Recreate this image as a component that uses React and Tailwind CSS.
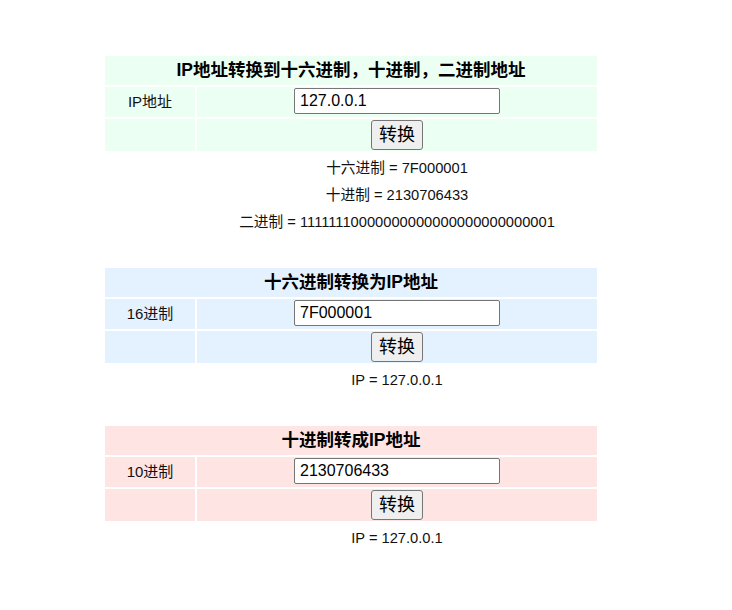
import React from 'react';

const font = { fontFamily: '"Liberation Sans", "Noto Sans CJK SC", sans-serif' };

const sections = [
    {
        title: 'IP地址转换到十六进制，十进制，二进制地址',
        label: 'IP地址',
        value: '127.0.0.1',
        bg: 'bg-[#ebfff3]',
        results: [
            '十六进制 = 7F000001',
            '十进制 = 2130706433',
            '二进制 = 11111110000000000000000000000001',
        ],
    },
    {
        title: '十六进制转换为IP地址',
        label: '16进制',
        value: '7F000001',
        bg: 'bg-[#e4f1ff]',
        results: ['IP = 127.0.0.1'],
    },
    {
        title: '十进制转成IP地址',
        label: '10进制',
        value: '2130706433',
        bg: 'bg-[#ffe4e4]',
        results: ['IP = 127.0.0.1'],
    },
];

const Converter = ({ section }) => (
    <div className="grid grid-cols-[90px_400px] gap-[2px] p-[2px] w-[496px]">
        <div className={`col-span-2 h-[29px] flex items-center justify-center text-[17.5px] font-bold text-black ${section.bg}`}>
            {section.title}
        </div>
        <div className={`h-[30px] flex items-center justify-center text-[15px] text-[#111] ${section.bg}`}>
            {section.label}
        </div>
        <div className={`h-[30px] flex items-start justify-center pt-[1px] ${section.bg}`}>
            <input
                type="text"
                defaultValue={section.value}
                className="w-[206px] h-[26px] bg-white border border-[#767676] rounded-[2px] pl-[5px] text-[16px] text-black outline-none"
                style={font}
            />
        </div>
        <div className={`h-[32px] ${section.bg}`}></div>
        <div className={`h-[32px] flex items-start justify-center pt-[1px] ${section.bg}`}>
            <button
                className="w-[52px] h-[30px] bg-[#efefef] border border-[#767676] rounded-[3px] text-[18px] text-black leading-none"
                style={font}
            >
                转换
            </button>
        </div>
        <div></div>
        <div className="flex flex-col items-center pt-[2px]">
            {section.results.map((line) => (
                <div key={line} className="h-[27px] leading-[27px] text-[14.7px] text-[#111] whitespace-nowrap">
                    {line}
                </div>
            ))}
        </div>
    </div>
);

export default function App() {
    return (
        <div className="w-[732px] min-h-[610px] bg-white pt-[54px] pl-[103px]" style={font}>
            <div className="flex flex-col gap-[28px]">
                {sections.map((s) => (
                    <Converter key={s.label} section={s} />
                ))}
            </div>
        </div>
    );
}
